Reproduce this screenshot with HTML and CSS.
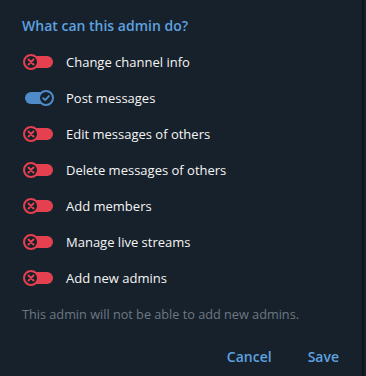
FILE: index.html
```html
<!DOCTYPE html>
<html>
<head>
    <meta charset="UTF-8">
    <title>Admin rights</title>
    <link rel="stylesheet" href="styles.css">
</head>
<body>
    <div class="box">
        <h2 class="titulo">What can this admin do?</h2>

        <div class="permisos">
            <div class="permiso">
                <span class="toggle off"><span class="knob"><svg viewBox="0 0 8 8"><path d="M1.5 1.5L6.5 6.5M6.5 1.5L1.5 6.5"/></svg></span></span>
                <span class="etiqueta">Change channel info</span>
            </div>
            <div class="permiso">
                <span class="toggle on"><span class="knob"><svg viewBox="0 0 8 8"><path d="M1.2 4.2L3.2 6.1L6.9 2.1"/></svg></span></span>
                <span class="etiqueta">Post messages</span>
            </div>
            <div class="permiso">
                <span class="toggle off"><span class="knob"><svg viewBox="0 0 8 8"><path d="M1.5 1.5L6.5 6.5M6.5 1.5L1.5 6.5"/></svg></span></span>
                <span class="etiqueta">Edit messages of others</span>
            </div>
            <div class="permiso">
                <span class="toggle off"><span class="knob"><svg viewBox="0 0 8 8"><path d="M1.5 1.5L6.5 6.5M6.5 1.5L1.5 6.5"/></svg></span></span>
                <span class="etiqueta">Delete messages of others</span>
            </div>
            <div class="permiso">
                <span class="toggle off"><span class="knob"><svg viewBox="0 0 8 8"><path d="M1.5 1.5L6.5 6.5M6.5 1.5L1.5 6.5"/></svg></span></span>
                <span class="etiqueta">Add members</span>
            </div>
            <div class="permiso">
                <span class="toggle off"><span class="knob"><svg viewBox="0 0 8 8"><path d="M1.5 1.5L6.5 6.5M6.5 1.5L1.5 6.5"/></svg></span></span>
                <span class="etiqueta">Manage live streams</span>
            </div>
            <div class="permiso">
                <span class="toggle off"><span class="knob"><svg viewBox="0 0 8 8"><path d="M1.5 1.5L6.5 6.5M6.5 1.5L1.5 6.5"/></svg></span></span>
                <span class="etiqueta">Add new admins</span>
            </div>
        </div>

        <p class="aviso">This admin will not be able to add new admins.</p>

        <div class="botones">
            <button type="button">Cancel</button>
            <button type="button">Save</button>
        </div>
    </div>
</body>
</html>
```

FILE: styles.css
```css
body {
    margin: 0;
    background-color: #17212b;
    font-family: "Open Sans", "DejaVu Sans", sans-serif;
}

.box {
    width: 364px;
    height: 376px;
    box-sizing: border-box;
    border-right: 2px solid #0e141b;
    padding: 16px 0 0 22px;
}

.titulo {
    margin: 0 0 8px 0;
    font-size: 14px;
    font-weight: 600;
    line-height: 20px;
    color: #5ea2e0;
}

.permisos {
    display: flex;
    flex-direction: column;
}

.permiso {
    display: flex;
    align-items: center;
    height: 36px;
}

.etiqueta {
    margin-left: 13px;
    font-size: 13px;
    color: #f5f5f5;
}

/* interruptor: pista + circulo con el icono */
.toggle {
    display: inline-flex;
    align-items: center;
    width: 28px;
    height: 12px;
    margin-left: 3px;
    border-radius: 6px;
}

.toggle.off {
    background-color: #e5404f;
    justify-content: flex-start;
}

.toggle.on {
    background-color: #4f8bc9;
    justify-content: flex-end;
}

.knob {
    display: flex;
    align-items: center;
    justify-content: center;
    flex-shrink: 0;
    width: 16px;
    height: 16px;
    box-sizing: border-box;
    border-radius: 50%;
    border: 2px solid;
    background-color: #17212b;
}

.knob svg {
    width: 8px;
    height: 8px;
    fill: none;
    stroke: currentColor;
    stroke-width: 1.9;
    stroke-linecap: round;
    stroke-linejoin: round;
}

.toggle.off .knob {
    margin-left: -2px;
    border-color: #e5404f;
    color: #e5404f;
}

.toggle.on .knob {
    margin-right: -1px;
    border-color: #4f8bc9;
    color: #4f8bc9;
}

.aviso {
    margin: 9px 0 0 0;
    font-size: 12.7px;
    color: #6d7883;
}

.botones {
    display: flex;
    justify-content: flex-end;
    gap: 36px;
    margin-top: 24px;
    padding-right: 23px;
}

button {
    background: none;
    border: none;
    padding: 0;
    color: #5ea2e0;
    font-family: "Open Sans", "DejaVu Sans", sans-serif;
    font-size: 14px;
    font-weight: 600;
    cursor: pointer;
}
```
